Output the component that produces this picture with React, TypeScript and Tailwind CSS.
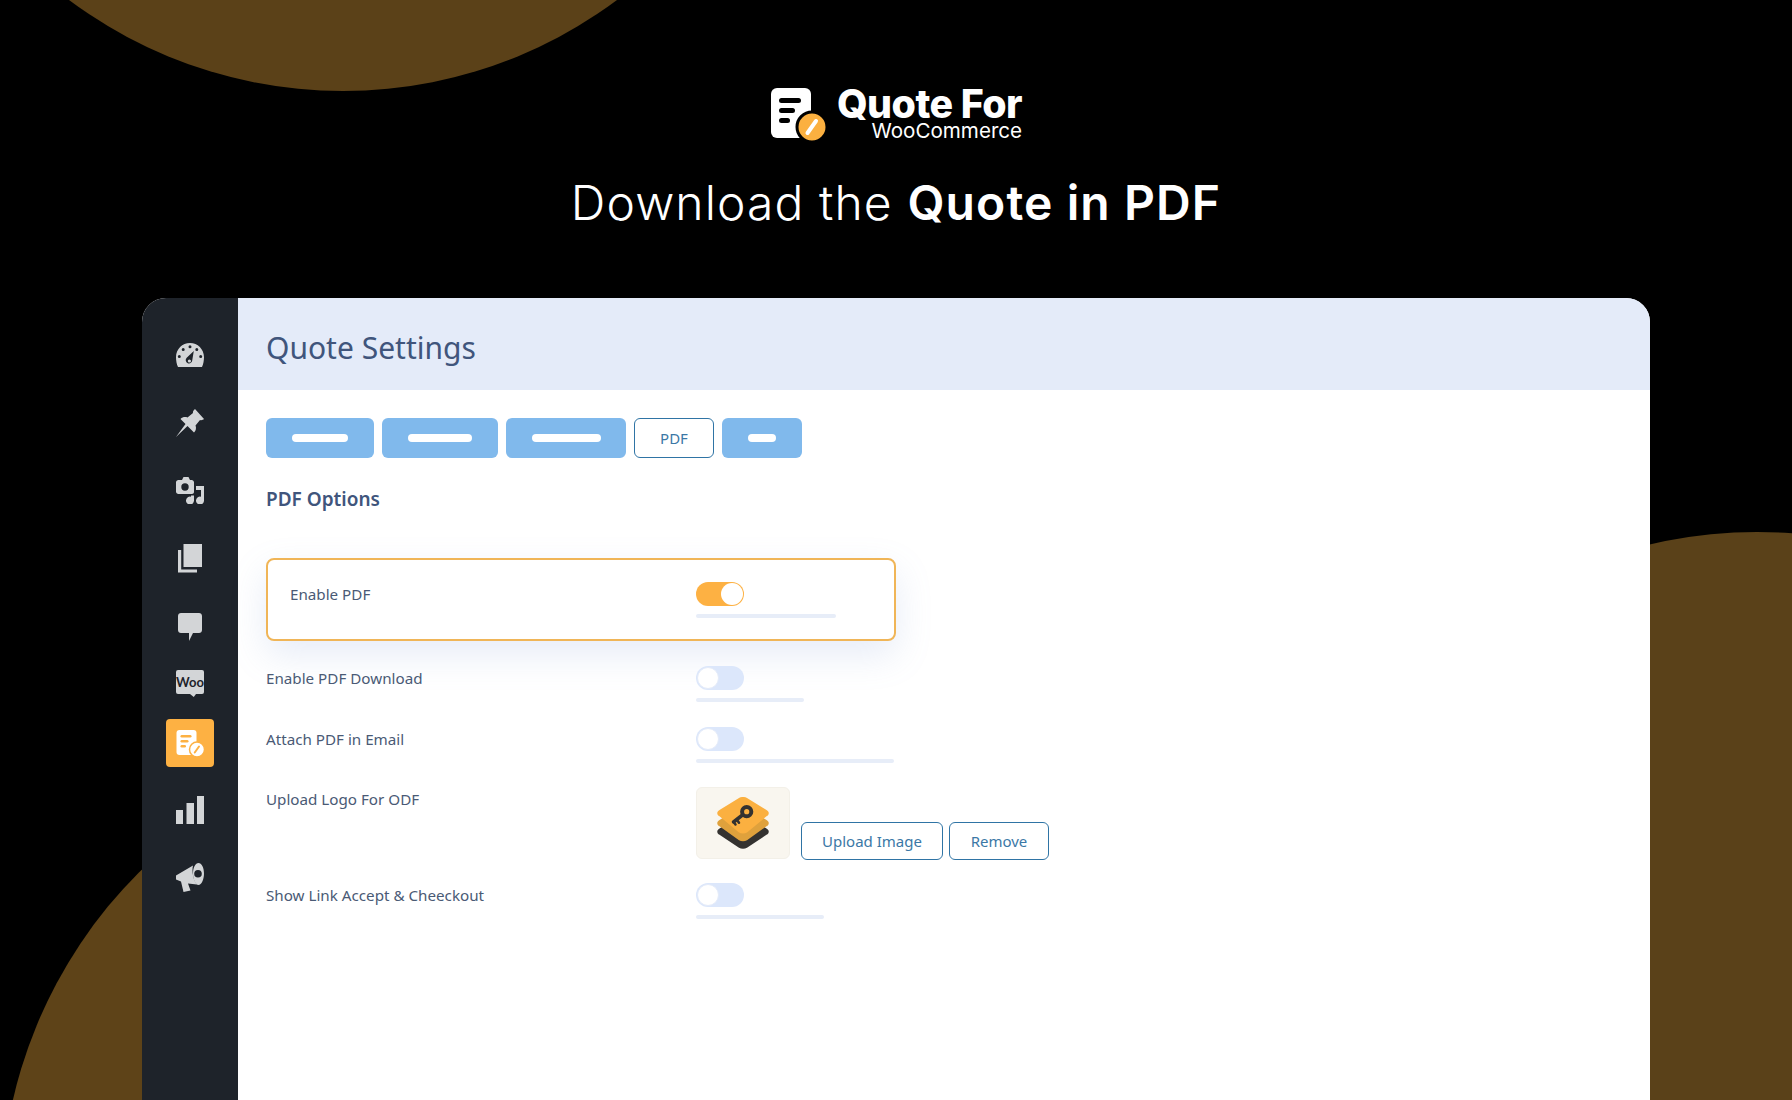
const NAV_ICON = "text-[#d3d5d7] fill-current";

const GaugeIcon = () => (
  <svg viewBox="0 0 28 24" className={`w-7 h-6 ${NAV_ICON}`}>
    <path
      fillRule="evenodd"
      d="M14 0C6.3 0 0 6.2 0 14c0 3.500.6 7 2 10h24c1.400-3 2-6.500 2-10C28 6.200 21.700 0 14 0ZM14 2.300a1.500 1.500 0 1 1 0 3 1.500 1.500 0 0 1 0-3ZM7.200 5a1.500 1.500 0 1 1 0 3 1.500 1.500 0 0 1 0-3ZM20.800 5a1.500 1.500 0 1 1 0 3 1.500 1.500 0 0 1 0-3ZM3.300 12a1.500 1.500 0 1 1 0 3 1.500 1.500 0 0 1 0-3ZM24.700 12a1.500 1.500 0 1 1 0 3 1.500 1.500 0 0 1 0-3Z"
    />
    <path d="M17.800 8 16.300 17a3.300 3.300 0 1 1-5.600-2.200Z" className="fill-[#1e232a]" />
    <circle cx="13.400" cy="18" r="1.600" className="fill-[#d3d5d7]" />
  </svg>
);

const PinIcon = () => (
  <svg viewBox="0 0 28 28" className={`w-7 h-7 ${NAV_ICON}`}>
    <path d="M19 0 28 10C27 11 25.500 11.500 24 11L19.500 16.500C20.500 19 20 21.500 18 23.500L11.500 17 0 28 9.500 15 4.500 10C6.500 8 9 7.500 11.500 8.500L17 4C16.500 2.800 17.500 1.200 19 0Z" />
  </svg>
);

const MediaIcon = () => (
  <svg viewBox="0 0 28 27" className={`w-7 h-[27px] ${NAV_ICON}`}>
    <path
      fillRule="evenodd"
      d="M2.500 3h3.500L7.500 0h5L14 3h1.500c1.500 0 2.500 1 2.500 2.500V15c0 1.200-1 2-2 2H2.500C1 17 0 16 0 14.500v-9C0 4 1 3 2.500 3Zm6.500 3.300a3.700 3.700 0 1 0 0 7.400 3.700 3.700 0 0 0 0-7.400Z"
    />
    <path d="M28 9v14.500a4 4 0 1 1-3-3.800V13h-5V9Z" />
    <path d="M18 18.500v5a4 4 0 1 1-3-3.800V18.500Z" />
  </svg>
);

const PagesIcon = () => (
  <svg viewBox="0 0 24 29" className={`w-6 h-[29px] ${NAV_ICON}`}>
    <path d="M5.500 0H24v23H5.500Z" />
    <path d="M0 6h3.200v19.500H19V28.500H0Z" />
  </svg>
);

const CommentIcon = () => (
  <svg viewBox="0 0 24 28" className={`w-6 h-7 ${NAV_ICON}`}>
    <path d="M3 0h18c1.700 0 3 1.300 3 3v14c0 1.700-1.300 3-3 3h-6l-4 8v-8H3c-1.700 0-3-1.300-3-3V3c0-1.700 1.300-3 3-3Z" />
  </svg>
);

const WooIcon = () => (
  <div className="relative w-7 h-[27px]">
    <div className="flex items-center justify-center w-7 h-6 rounded-[2px] bg-[#d3d5d7] text-[#1e232a] font-['Lato',sans-serif] text-[13px] leading-none font-bold">
      Woo
    </div>
    <svg viewBox="0 0 8 4" className="absolute left-[13px] top-6 w-2 h-[3px] fill-[#d3d5d7]">
      <path d="M0 0h8L5 4Z" />
    </svg>
  </div>
);

const BarsIcon = () => (
  <svg viewBox="0 0 28 28" className={`w-7 h-7 ${NAV_ICON}`}>
    <path d="M0 14h7v14H0ZM10.500 7h7.500v21h-7.500ZM21 0h7v28h-7Z" />
  </svg>
);

const MegaphoneIcon = () => (
  <svg viewBox="0 0 28 29" className={`w-7 h-[29px] ${NAV_ICON}`}>
    <path d="M17 2.500 0 12.500V16.500L5 18.500 7.500 29 14.500 27.500 12 20.500 21 21.500C17.500 18 15.500 8 17 2.500Z" />
    <path
      fillRule="evenodd"
      d="M22.500 0c3 0 5.500 4.500 5.500 10.500S25.500 22 22.500 22 17 16.500 17 10.500 19.500 0 22.500 0Zm-.5 7a3.800 3.800 0 1 0 0 7.600A3.800 3.800 0 0 0 22 7Z"
    />
  </svg>
);

// doc + pencil badge, used in the header logo and in the active nav item
const QuoteMark = ({ tile, badge, ring, pencil, line }: { tile: string; badge: string; ring: string; pencil: string; line: string }) => (
  <svg viewBox="0 0 58 54" className="w-full h-full">
    <rect x="1" y="0" width="40" height="50" rx="6" className={tile} />
    <rect x="9" y="10" width="22" height="5" rx="2.500" className={line} />
    <rect x="9" y="20" width="16" height="5" rx="2.500" className={line} />
    <rect x="9" y="30" width="11" height="5" rx="2.500" className={line} />
    <circle cx="42" cy="39" r="15" className={badge} />
    <circle cx="42" cy="39" r="15" fill="none" strokeWidth="3" className={ring} />
    <path d="M37.500 45 46 33" strokeWidth="4" strokeLinecap="round" fill="none" className={pencil} />
  </svg>
);

const KeyLogo = () => (
  <svg viewBox="0 0 52 52" className="w-[52px] h-[52px]">
    <path d="M22 19.500c2.300-1.400 5.700-1.400 8 0l19.500 12c3 1.800 3 4.500 0 6.300L30 50.800c-2.300 1.400-5.700 1.400-8 0L2.500 37.800c-3-1.800-3-4.500 0-6.300Z" fill="#343230" />
    <path d="M22 11c2.300-1.400 5.700-1.400 8 0l19.500 12c3 1.800 3 4.500 0 6.300L30 43.300c-2.300 1.400-5.700 1.400-8 0L2.500 29.300c-3-1.800-3-4.500 0-6.300Z" fill="#dfa13c" />
    <path d="M22 1c2.300-1.400 5.700-1.400 8 0l19.500 12c3 1.800 3 4.500 0 6.300L30 35.500c-2.300 1.400-5.700 1.400-8 0L2.500 19.300c-3-1.800-3-4.500 0-6.300Z" fill="#fbb040" />
    <circle cx="29.700" cy="14.700" r="4.600" fill="none" stroke="#343230" strokeWidth="4" />
    <path d="M25.500 18 16.500 25" fill="none" stroke="#343230" strokeWidth="3.500" strokeLinecap="round" />
    <path d="M20 23 22 25.800M17 25.500 18.500 27.500" fill="none" stroke="#343230" strokeWidth="2.500" strokeLinecap="round" />
  </svg>
);

const Toggle = ({ on, barWidth }: { on?: boolean; barWidth: string }) => (
  <div className="flex flex-col gap-2">
    <div
      className={`flex items-center w-12 h-6 rounded-full p-px ${
        on ? "justify-end bg-[#fdb143]" : "justify-start bg-[#dce7fb]"
      }`}
    >
      <span className={`w-[22px] h-[22px] rounded-full bg-white ${on ? "" : "border border-[#e4ebf9]"}`} />
    </div>
    <div className={`h-1 rounded-full bg-[#e7edf8] ${barWidth}`} />
  </div>
);

const Label = ({ children }: { children: string }) => (
  <div className="w-[430px] shrink-0 text-[15.2px] leading-6 text-[#4a5a75]">{children}</div>
);

const TABS = [
  { box: "w-[108px]", bar: "w-14" },
  { box: "w-[116px]", bar: "w-16" },
  { box: "w-[120px]", bar: "w-[69px]" },
];

const OutlineButton = ({ children, width }: { children: string; width: string }) => (
  <button className={`h-[38px] rounded-md border border-[#2f74a5] bg-white text-[15px] text-[#3b78a6] ${width}`}>
    {children}
  </button>
);

export default function App() {
  return (
    <div className="relative w-[1792px] h-[1100px] overflow-hidden bg-black font-['Noto_Sans',sans-serif]">
      {/* background blobs */}
      <div className="absolute left-[-115px] top-[-825px] w-[916px] h-[916px] rounded-full bg-[#5b4118]" />
      <div className="absolute left-[1287px] top-[532px] w-[940px] h-[940px] rounded-full bg-[#5a4119]" />
      <div className="absolute left-[1px] top-[735px] w-[940px] h-[940px] rounded-full bg-[#5e4318]" />

      <div className="relative flex flex-col items-center h-full">
        {/* logo */}
        <div className="flex items-start gap-[9px] mt-[86px] h-[58px] text-white font-['Inter',sans-serif]">
          <div className="w-[58px] h-[54px] mt-[2px]">
            <QuoteMark
              tile="fill-white"
              badge="fill-[#fbb040]"
              ring="stroke-black"
              pencil="stroke-white"
              line="fill-black"
            />
          </div>
          <div className="flex flex-col items-end">
            <div className="text-[39.3px] leading-[36px] font-extrabold tracking-[-0.5px]">Quote For</div>
            <div className="text-[20.6px] leading-[18px]">WooCommerce</div>
          </div>
        </div>

        {/* heading */}
        <h1 className="mt-[31px] text-[48px] leading-[56px] text-white font-light tracking-[1.1px] font-['Inter',sans-serif]">
          Download the <span className="font-semibold">Quote in PDF</span>
        </h1>

        {/* window */}
        <div className="flex w-[1508px] flex-1 mt-[67px] rounded-t-[24px] overflow-hidden bg-white">
          <aside className="flex flex-col items-center w-24 shrink-0 bg-[#1e232a] pt-[45px]">
            <GaugeIcon />
            <div className="mt-[42px]"><PinIcon /></div>
            <div className="mt-[40px]"><MediaIcon /></div>
            <div className="mt-[40px]"><PagesIcon /></div>
            <div className="mt-[40px]"><CommentIcon /></div>
            <div className="mt-[29px]"><WooIcon /></div>
            <div className="flex items-center justify-center w-12 h-12 mt-[22px] rounded-[4px] bg-[#fdb143]">
              <div className="w-[29px] h-[27px] ml-px">
                <QuoteMark
                  tile="fill-white"
                  badge="fill-white"
                  ring="stroke-[#fdb143]"
                  pencil="stroke-[#fdb143]"
                  line="fill-[#fdb143]"
                />
              </div>
            </div>
            <div className="mt-[29px]"><BarsIcon /></div>
            <div className="mt-[39px]"><MegaphoneIcon /></div>
          </aside>

          <main className="flex-1 min-w-0">
            <div className="flex items-center h-[92px] px-7 pt-[7px] bg-[#e4ebf9]">
              <h2 className="text-[30px] leading-10 text-[#40557c]">Quote Settings</h2>
            </div>

            <div className="px-7 pt-7">
              <div className="flex gap-2">
                {TABS.map((tab) => (
                  <div key={tab.box} className={`flex items-center justify-center h-10 rounded-md bg-[#80b9ec] ${tab.box}`}>
                    <span className={`h-2 rounded-full bg-white ${tab.bar}`} />
                  </div>
                ))}
                <div className="flex items-center justify-center w-20 h-10 rounded-md border border-[#2f74a5] text-[15px] text-[#3b78a6]">
                  PDF
                </div>
                <div className="flex items-center justify-center w-20 h-10 rounded-md bg-[#80b9ec]">
                  <span className="w-7 h-2 rounded-full bg-white" />
                </div>
              </div>

              <h3 className="mt-[28px] text-[19px] leading-[26px] font-semibold text-[#40557c]">PDF Options</h3>

              {/* highlighted row */}
              <div className="flex w-[630px] h-[83px] mt-[46px] pl-[22px] pt-[22px] rounded-lg border-2 border-[#f0b557] bg-white shadow-[0_14px_36px_rgba(120,150,210,0.18)]">
                <div className="w-[406px] shrink-0 text-[15.2px] leading-6 text-[#4a5a75]">Enable PDF</div>
                <Toggle on barWidth="w-[140px]" />
              </div>

              <div className="flex mt-[25px]">
                <Label>Enable PDF Download</Label>
                <Toggle barWidth="w-[108px]" />
              </div>

              <div className="flex mt-[25px]">
                <Label>Attach PDF in Email</Label>
                <Toggle barWidth="w-[198px]" />
              </div>

              <div className="flex mt-[24px]">
                <div className="w-[430px] shrink-0 text-[15.2px] leading-6 text-[#4a5a75]">Upload Logo For ODF</div>
                <div className="flex items-end gap-[6px]">
                  <div className="flex items-center justify-center w-[94px] h-[72px] mr-[5px] mb-px rounded-md border border-[#f3f0e8] bg-[#f9f6ef]">
                    <KeyLogo />
                  </div>
                  <OutlineButton width="w-[142px]">Upload Image</OutlineButton>
                  <OutlineButton width="w-[100px]">Remove</OutlineButton>
                </div>
              </div>

              <div className="flex mt-[23px]">
                <Label>Show Link Accept &amp; Cheeckout</Label>
                <Toggle barWidth="w-[128px]" />
              </div>
            </div>
          </main>
        </div>
      </div>
    </div>
  );
}
